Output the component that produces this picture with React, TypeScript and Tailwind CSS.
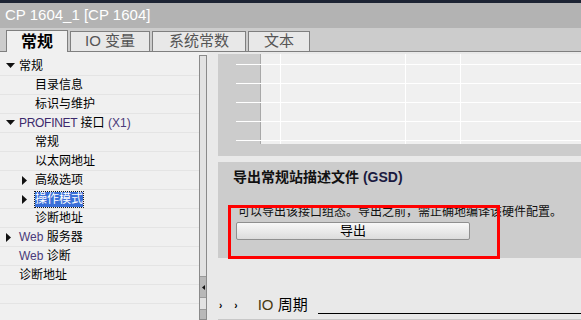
import { Fragment } from 'react';

const font = { fontFamily: '"Liberation Sans", "Noto Sans CJK SC", sans-serif' };

type Row = { label: React.ReactNode; indent: number; arrow?: 'down' | 'right'; selected?: boolean };

const Web = () => <span className="text-[#4a3a7a]">Web</span>;

const rows: Row[] = [
  { label: '常规', indent: 0, arrow: 'down' },
  { label: '目录信息', indent: 2 },
  { label: '标识与维护', indent: 2 },
  {
    label: (
      <>
        <span className="tracking-[-0.3px] text-[#3c2a6c]">PROFINET</span> 接口 <span className="text-[#4a3a7a]">(X1)</span>
      </>
    ),
    indent: 0,
    arrow: 'down',
  },
  { label: '常规', indent: 2 },
  { label: '以太网地址', indent: 2 },
  { label: '高级选项', indent: 2, arrow: 'right' },
  { label: '操作模式', indent: 2, arrow: 'right', selected: true },
  { label: '诊断地址', indent: 2 },
  { label: <><Web /> 服务器</>, indent: 0, arrow: 'right' },
  { label: <><Web /> 诊断</>, indent: 0 },
  { label: '诊断地址', indent: 0 },
  { label: '', indent: 0 },
];

function Arrow({ dir }: { dir: 'down' | 'right' }) {
  return dir === 'down' ? (
    <svg width="9" height="6" viewBox="0 0 9 6"><path d="M0 0h9L4.5 5z" fill="#111" /></svg>
  ) : (
    <svg width="6" height="9" viewBox="0 0 6 9"><path d="M0 0v9l5-4.5z" fill="#111" /></svg>
  );
}

function TreeRow({ row }: { row: Row }) {
  return (
    <div
      className={`flex h-[19px] items-center border-b border-[#e4e4e4] text-[12px] text-black ${
        row.indent === 2 ? 'pl-[19px]' : 'pl-[3px]'
      }`}
    >
      <div className="flex w-[16px] shrink-0 items-center pl-[3px]">
        {row.arrow ? <Arrow dir={row.arrow} /> : null}
      </div>
      <span
        className={
          row.selected
            ? 'bg-[#3a6fd8] leading-[15px] text-white outline-1 outline-dotted outline-[#1a1a1a]'
            : ''
        }
      >
        {row.label}
      </span>
    </div>
  );
}

export default function App() {
  const tabs = ['常规', 'IO 变量', '系统常数', '文本'];
  const tabW = [62, 80, 94, 62];
  return (
    <div className="flex h-[320px] w-[581px] flex-col overflow-hidden bg-[#e9e9e9]" style={font}>
      {/* window chrome */}
      <div className="h-[3px] bg-[#1d2434]" />
      <div className="flex h-[25px] items-center bg-[#b3b3b3] pl-[5px] text-[15px] text-white">
        CP 1604_1 [CP 1604]
      </div>
      {/* tabs */}
      <div className="flex h-[24px] items-end gap-[2px] border-b border-[#7f7f7f] bg-[#cccccc] pl-[6px]">
        {tabs.map((t, i) => (
          <div
            key={t}
            style={{ width: tabW[i] }}
            className={
              i === 0
                ? 'mb-[-1px] flex h-[22px] items-center justify-center border border-b-0 border-[#7f7f7f] bg-[#f0f0f0] text-[16px] font-bold text-black'
                : 'flex h-[20px] items-center justify-center border border-b-0 border-[#7f7f7f] bg-[#e8e8e8] text-[15px] text-[#555]'
            }
          >
            {t}
          </div>
        ))}
      </div>

      <div className="flex min-h-0 flex-1">
        {/* tree */}
        <div className="relative flex w-[207px] shrink-0 bg-[#f0f0f0]">
          <div className="flex flex-1 flex-col pt-[5px]">
            {rows.map((r, i) => (
              <Fragment key={i}>
                <TreeRow row={r} />
              </Fragment>
            ))}
          </div>
          {/* scrollbar */}
          <div className="mt-[3px] flex w-[8px] flex-col border border-[#8a8a8a] bg-[#e2e2e2]">
            <div className="flex-1" />
            <div className="flex h-[22px] items-center justify-center border-y border-[#9a9a9a] bg-[#b8b8b8]">
              <svg width="3" height="5" viewBox="0 0 3 5"><path d="M3 0v5L0 2.5z" fill="#111" /></svg>
            </div>
            <div className="h-[11px]" />
            <div className="h-[10px] border-t border-[#9a9a9a] bg-[#b8b8b8]" />
          </div>
        </div>

        {/* content */}
        <div className="flex min-w-0 flex-1 flex-col bg-[#e9e9e9] pl-[11px]">
          {/* table area */}
          <div className="mt-[2px] flex h-[102px] flex-col bg-[#cccccc]">
            <div className="relative ml-[42px] h-[90px] border-l border-[#a8a8a8] bg-[#f0f0f0]">
              {[10, 29, 48, 67, 86].map((y) => (
                <div key={y} className="absolute left-[-25px] right-0 h-[1px] bg-white" style={{ top: y }} />
              ))}
              {[19, 144, 199].map((x) => (
                <div key={x} className="absolute top-0 bottom-0 w-[1px] bg-white" style={{ left: x }} />
              ))}
            </div>
          </div>

          {/* GSD section */}
          <div className="relative mt-[6px] h-[96px] bg-[#cccccc]">
            <div className="pl-[15px] pt-[5px] text-[14px] font-bold text-[#111]">
              导出常规站描述文件 <span className="text-[#1a1a40]">(GSD)</span>
            </div>
            <div className="whitespace-nowrap pl-[20px] pt-[16px] text-[12px] leading-[16px] text-[#111]">
              可以导出该接口组态。导出之前，需正确地编译该硬件配置。
            </div>
            <button className="ml-[18px] mt-[2px] flex h-[18px] w-[234px] items-center justify-center rounded-[2px] border border-[#8f8f8f] bg-gradient-to-b from-[#f8f8f8] to-[#dcdcdc] text-[13px] text-black">
              导出
            </button>
            <div className="absolute left-[10px] top-[43px] h-[54px] w-[272px] border-[3px] border-[#ff0000]" />
          </div>

          {/* IO cycle */}
          <div className="mt-[37px] flex h-[20px] items-center text-[15px] text-black">
            <span className="ml-[1px] text-[10px] font-bold">›</span>
            <span className="ml-[12px] text-[10px] font-bold">›</span>
            <span className="ml-[20px]">
              <span className="text-[#4a3a10]">IO</span> 周期
            </span>
            <div className="mb-[1px] ml-[10px] h-[1px] flex-1 self-end bg-black" />
          </div>
          <div className="mt-[4px] h-[1px] bg-[#c8c8c8]" />
        </div>
      </div>
    </div>
  );
}
